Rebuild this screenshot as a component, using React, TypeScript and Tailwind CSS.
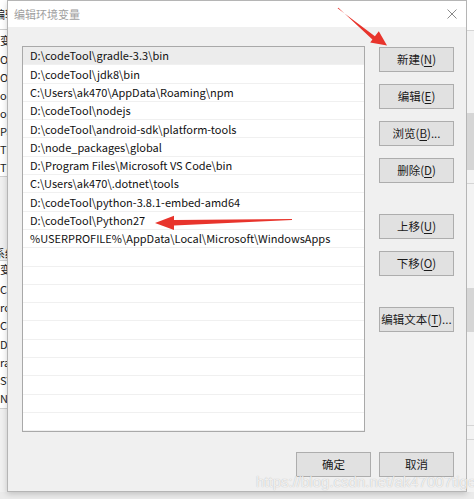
import React from "react";

const paths = [
  "D:\\codeTool\\gradle-3.3\\bin",
  "D:\\codeTool\\jdk8\\bin",
  "C:\\Users\\ak470\\AppData\\Roaming\\npm",
  "D:\\codeTool\\nodejs",
  "D:\\codeTool\\android-sdk\\platform-tools",
  "D:\\node_packages\\global",
  "D:\\Program Files\\Microsoft VS Code\\bin",
  "C:\\Users\\ak470\\.dotnet\\tools",
  "D:\\codeTool\\python-3.8.1-embed-amd64",
  "D:\\codeTool\\Python27",
  "%USERPROFILE%\\AppData\\Local\\Microsoft\\WindowsApps",
];

const rows = [...paths, ...Array(10).fill("")];

function WinButton({ label, mnemonic, suffix = "" }: { label: string; mnemonic?: string; suffix?: string }) {
  return (
    <button className="w-[75px] h-[25px] shrink-0 bg-[#e1e1e1] border border-[#adadad] text-[11.5px] text-[#1a1a1a] flex items-center justify-center leading-none">
      {label}
      {mnemonic && (
        <>
          (<span className="underline underline-offset-2">{mnemonic}</span>){suffix}
        </>
      )}
    </button>
  );
}

export default function App() {
  return (
    <div className="relative w-[474px] h-[499px] overflow-hidden bg-[#ebebeb] flex font-['Noto_Sans_CJK_SC',sans-serif]">
      {/* window behind, left edge */}
      <div className="w-[7px] h-[492px] shrink-0 overflow-hidden bg-[#f0f0f0] text-[11px] text-[#222] leading-none flex flex-col whitespace-nowrap">
        <div className="h-[30px] flex items-center -ml-[6px] border-b border-[#cfcfcf] bg-white">编辑</div>
        <div className="h-[20px] pt-[5px] bg-white">变</div>
        <div className="bg-white flex flex-col">
          {["Or", "Or", "op", "op", "Pa", "TE", "TM"].map((t, i) => (
            <div key={i} className="h-[18px] flex items-center">{t}</div>
          ))}
        </div>
        <div className="h-[70px] border-t border-[#cfcfcf]" />
        <div className="h-[14px] flex items-center -ml-[6px]">系统</div>
        <div className="h-[18px] flex items-center border-t border-[#cfcfcf] bg-white">变</div>
        <div className="bg-white flex flex-col pt-[2px]">
          {["Co", "rc", "CO", "Dr", "ra", "ST", "NI"].map((t, i) => (
            <div key={i} className="h-[18.3px] flex items-center">{t}</div>
          ))}
        </div>
        <div className="flex-1 border-t border-[#cfcfcf]" />
      </div>

      {/* dialog */}
      <div className="w-[460px] h-[492px] shrink-0 border border-[#b5b5b5] bg-[#f0f0f0] flex flex-col shadow-[0_2px_6px_rgba(0,0,0,0.18)]">
        <div className="h-[26px] shrink-0 bg-white flex items-center justify-between pl-[6px] pr-[8px]">
          <span className="text-[11px] text-[#a0a0a0]">编辑环境变量</span>
          <svg width="10" height="10" viewBox="0 0 10 10" className="mr-[1px]">
            <path d="M0.5 0.5 L9.5 9.5 M9.5 0.5 L0.5 9.5" stroke="#8a8a8a" strokeWidth="1" />
          </svg>
        </div>

        <div className="flex pl-[14px] pr-[12px] pt-[19px] gap-[14px]">
          <div className="w-[343px] h-[386px] border border-[#a9a9a9] bg-white flex flex-col overflow-hidden">
            {rows.map((p, i) => (
              <div
                key={i}
                className={`h-[18.3px] shrink-0 border-b border-[#f0f0f0] flex items-center pl-[7px] text-[11px] text-[#111] whitespace-nowrap ${
                  i === 0 ? "bg-[#ececec]" : ""
                }`}
              >
                {p}
              </div>
            ))}
          </div>

          <div className="flex flex-col pt-[1px]">
            <WinButton label="新建" mnemonic="N" />
            <div className="h-[12px]" />
            <WinButton label="编辑" mnemonic="E" />
            <div className="h-[12px]" />
            <WinButton label="浏览" mnemonic="B" suffix="..." />
            <div className="h-[12px]" />
            <WinButton label="删除" mnemonic="D" />
            <div className="h-[31px]" />
            <WinButton label="上移" mnemonic="U" />
            <div className="h-[12px]" />
            <WinButton label="下移" mnemonic="O" />
            <div className="h-[31px]" />
            <WinButton label="编辑文本" mnemonic="T" suffix="..." />
          </div>
        </div>

        <div className="flex justify-end gap-[8px] pr-[12px] pt-[20px]">
          <WinButton label="确定" />
          <WinButton label="取消" />
        </div>
      </div>

      {/* window behind, right edge */}
      <div className="w-[7px] h-[492px] shrink-0 flex flex-col bg-[#f3f3f3]">
        <div className="h-[31px] border-b border-[#d5d5d5] bg-white" />
        <div className="h-[82px]" />
        <div className="h-[57px] bg-[#d6d6d6]" />
        <div className="h-[14px] border-b border-[#d5d5d5]" />
        <div className="h-[104px]" />
        <div className="h-[44px] bg-[#d6d6d6]" />
        <div className="h-[94px] border-b border-[#d5d5d5]" />
        <div className="h-[14px] border-b border-[#d5d5d5]" />
        <div className="flex-1" />
      </div>

      {/* red arrows */}
      <svg className="absolute inset-0 pointer-events-none" width="474" height="499" viewBox="0 0 474 499">
        <polygon
          points="337.6,8.3 374.9,36.3 378.8,31.2 387,45.5 370.2,42.4 372.4,39.4 338.4,7.7"
          fill="#e8342c"
        />
        <polygon
          points="292,219 174,219.9 174,215.8 155,223 174,230 174,225.6 292,220.1"
          fill="#e8342c"
        />
      </svg>

      {/* watermark */}
      <div className="absolute left-[256px] top-[474px] text-[15px] leading-none text-white/80 font-['Liberation_Sans',sans-serif] [text-shadow:0_0_1px_rgba(0,0,0,0.3)]">
        https://blog.csdn.net/ak47007tiger
      </div>
    </div>
  );
}
